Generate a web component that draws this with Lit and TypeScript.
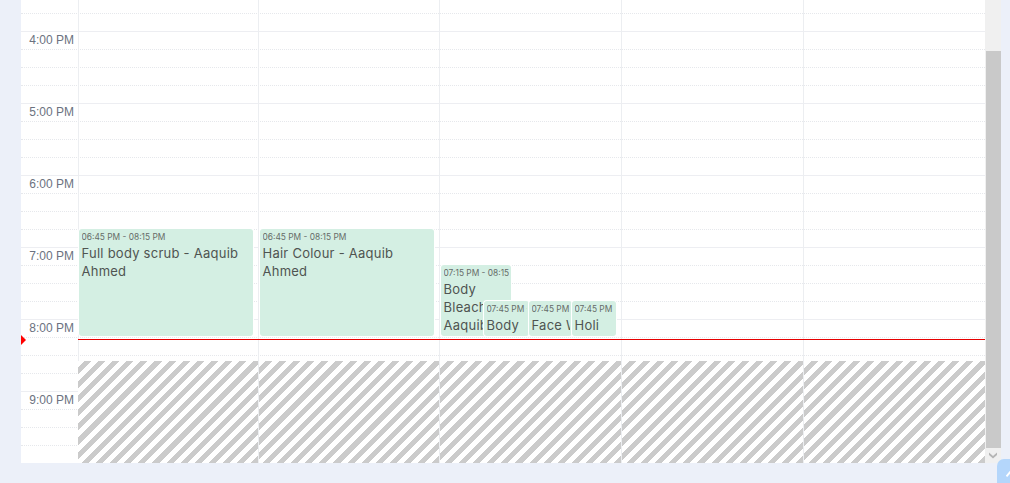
import { LitElement, html, css } from "lit";
import { customElement } from "lit/decorators.js";

interface Ev { left: number; top: number; w: number; h: number; time: string; title: string; z: number; }

const LABELS: Record<number, string> = { 2: "4:00 PM", 6: "5:00 PM", 10: "6:00 PM", 14: "7:00 PM", 18: "8:00 PM", 22: "9:00 PM" };

const EVENTS: Ev[] = [
  { left: 79, top: 229, w: 174, h: 107, time: "06:45 PM - 08:15 PM", title: "Full body scrub - Aaquib Ahmed", z: 1 },
  { left: 260, top: 229, w: 174, h: 107, time: "06:45 PM - 08:15 PM", title: "Hair Colour - Aaquib Ahmed", z: 1 },
  { left: 441, top: 265, w: 70, h: 71, time: "07:15 PM - 08:15 PM", title: "Body Bleach - Aaquib Ahmed", z: 1 },
  { left: 484, top: 301, w: 45, h: 35, time: "07:45 PM - 08:15 PM", title: "Body", z: 2 },
  { left: 529, top: 301, w: 43, h: 35, time: "07:45 PM - 08:15 PM", title: "Face Wash", z: 3 },
  { left: 572, top: 301, w: 44, h: 35, time: "07:45 PM - 08:15 PM", title: "Holi", z: 4 },
];

@customElement("app-root")
export class AppRoot extends LitElement {
  static styles = css`
    :host { display: block; width: 1010px; height: 483px; background: #ecf0f9; overflow: hidden; position: relative; font-family: Inter, "Liberation Sans", sans-serif; }
    .shell { display: flex; height: 463px; padding-left: 21px; }
    .panel { position: relative; width: 964px; height: 463px; background: #fff; overflow: hidden; }
    .rows { display: flex; flex-direction: column; margin-top: -4px; }
    .row { height: 18px; box-sizing: border-box; border-bottom: 1px dotted #e6e8ec; flex: none; }
    .row.hour { border-bottom: 1px solid #edeef2; }
    .label { display: block; width: 53px; font-family: "Liberation Sans", Arial, sans-serif; font-size: 12px; line-height: 16px; color: #6b7280; text-align: right; white-space: nowrap; }
    .cols { position: absolute; inset: 0 0 0 57px; display: grid; grid-template-columns: 180.4px 181px 182px 182px 182px; }
    .col { border-left: 1px solid #eceef1; }
    .hatch { position: absolute; left: 57px; right: 0; top: 361px; bottom: 0; display: grid; grid-template-columns: 180.4px 181px 182px 182px 182px; }
    .hatch div { border-left: 1px solid #eceef1; background: repeating-linear-gradient(-45deg, #cbcbcb 0, #cbcbcb 5px, #fff 5px, #fff 10px); }
    .hatch div:first-child { border-left: none; }
    .now { position: absolute; left: 57px; right: 0; top: 339px; height: 1px; background: #e60000; }
    .arrow { position: absolute; left: 0; top: 335px; width: 0; height: 0; border-left: 5px solid #f00; border-top: 5px solid transparent; border-bottom: 5px solid transparent; }
    .ev { position: absolute; box-sizing: border-box; background: #d4efe3; border-radius: 3px; overflow: hidden; color: #4f5451; padding: 1px 2.5px 0; box-shadow: 0 0 0 1px #fff; }
    .time { font-size: 8.4px; line-height: 14px; white-space: nowrap; overflow: hidden; color: #666b68; }
    .title { font-size: 13px; line-height: 18px; font-weight: 400; letter-spacing: 0.25px; }
    .short .title { white-space: nowrap; overflow: hidden; }
    .bar { position: relative; width: 16px; height: 463px; background: #f0f0f0; }
    .thumb { margin: 51px 0 0 1px; width: 15px; height: 397px; background: #c9c9c9; }
    .down { position: absolute; left: 4px; top: 452px; }
    .fab { position: absolute; left: 997px; top: 459px; width: 50px; height: 50px; border-radius: 7px; background: #b4d6fb; }
    .fab svg { position: absolute; left: 9px; top: 11px; }
  `;

  render() {
    const rows = Array.from({ length: 27 }, (_, i) => i);
    return html`
      <div class="shell">
        <div class="panel">
          <div class="rows">
            ${rows.map(
              (i) => html`<div class="row ${i % 4 === 1 ? "hour" : ""}">
                ${LABELS[i] ? html`<span class="label">${LABELS[i]}</span>` : ""}
              </div>`
            )}
          </div>
          <div class="cols">${[0, 1, 2, 3, 4].map(() => html`<div class="col"></div>`)}</div>
          <div class="hatch">${[0, 1, 2, 3, 4].map(() => html`<div></div>`)}</div>
          <div class="now"></div>
          <div class="arrow"></div>
          ${EVENTS.map(
            (e) => html`<div
              class="ev ${e.h < 40 ? "short" : ""}"
              style="left:${e.left - 21}px;top:${e.top}px;width:${e.w}px;height:${e.h}px;z-index:${e.z}"
            >
              <div class="time">${e.time}</div>
              <div class="title">${e.title}</div>
            </div>`
          )}
        </div>
        <div class="bar">
          <div class="thumb"></div>
          <svg class="down" width="8" height="7" viewBox="0 0 8 7"><path d="M0 0.5 L4 4 L8 0.5 V3 L4 6.5 L0 3Z" fill="#b5b5b5"/></svg>
        </div>
      </div>
      <div class="fab">
        <svg width="6" height="8" viewBox="0 0 6 8"><path d="M0.5 6.5 L4.5 1.5" stroke="#fff" stroke-width="2" fill="none"/></svg>
      </div>
    `;
  }
}
